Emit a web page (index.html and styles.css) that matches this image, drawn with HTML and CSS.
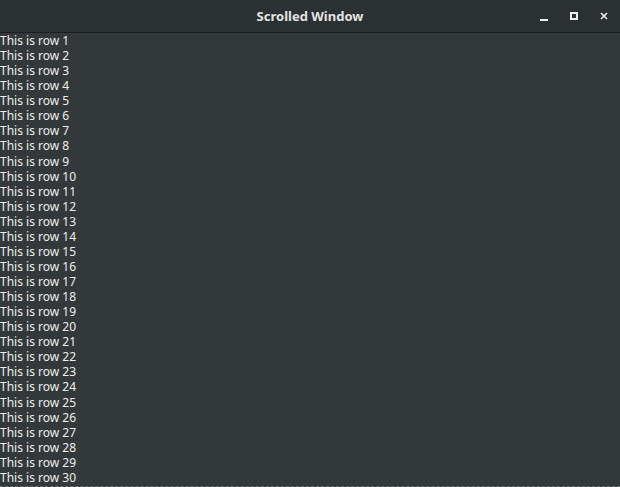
FILE: index.html
```html
<!DOCTYPE html>
<html lang="en">
<head>
  <meta charset="UTF-8" />
  <title>Scrolled Window</title>
  <link rel="stylesheet" href="styles.css">
</head>
<body>
  <div class="window">
    <div class="titlebar">
      <span class="title">Scrolled Window</span>
      <div class="controls">
        <span class="btn min"></span>
        <span class="btn max"></span>
        <svg class="btn close" width="8" height="8" viewBox="0 0 8 8">
          <path d="M1 1L7 7M7 1L1 7" stroke="#eeeeec" stroke-width="1.6" />
        </svg>
      </div>
    </div>
    <div class="list" id="list"></div>
  </div>

  <script>
    const list = document.getElementById("list");
    for (let i = 1; i <= 30; i++) {
      const row = document.createElement("div");
      row.className = "row";
      row.textContent = "This is row " + i;
      list.appendChild(row);
    }
  </script>
</body>
</html>
```

FILE: styles.css
```css
body {
  margin: 0;
  background: #33393b;
  font-family: "Noto Sans", "DejaVu Sans", sans-serif;
  color: #eeeeec;
}
.window {
  width: 620px;
  height: 487px;
  display: flex;
  flex-direction: column;
  overflow: hidden;
}
.titlebar {
  height: 32px;
  flex: none;
  background: #2b3033;
  border-bottom: 1px solid #1c1f20;
  display: flex;
  align-items: center;
  justify-content: center;
  position: relative;
}
.title {
  font-weight: bold;
  font-size: 13px;
  color: #e4e4e2;
}
.controls {
  position: absolute;
  right: 12px;
  top: 0;
  height: 32px;
  display: flex;
  align-items: center;
  gap: 22px;
}
.btn {
  display: block;
  width: 8px;
  height: 8px;
}
.min {
  border-bottom: 2px solid #eeeeec;
  height: 2px;
  margin-top: 6px;
}
.max {
  box-sizing: border-box;
  border: 2px solid #eeeeec;
  width: 8px;
  height: 8px;
}
.list {
  flex: 1;
  border-bottom: 1px dashed #6b7072;
}
.row {
  height: 15.07px;
  line-height: 15px;
  font-size: 12px;
  overflow: hidden;
}
```
